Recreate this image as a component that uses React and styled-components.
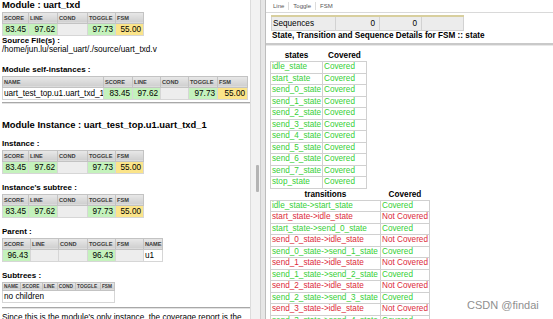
import styled, { createGlobalStyle } from 'styled-components';

const GlobalStyle = createGlobalStyle`
html, body {
  margin: 0;
  padding: 0;
  overflow: hidden;
  background: #fff;
}
body {
  font-family: "Liberation Sans", Arial, sans-serif;
  color: #000;
}
`

const tones = {
  green: '#c4f2bc',
  yellow: '#fbe48a',
  empty: '#ededed',
  plain: '#fff',
}

const scoreCols = ['SCORE', 'LINE', 'COND', 'TOGGLE', 'FSM'];

const moduleCells = [
  ['83.45', 'green'], ['97.62', 'green'], ['', 'empty'], ['97.73', 'green'], ['55.00', 'yellow'],
];

const states = [
  'idle_state', 'start_state', 'send_0_state', 'send_1_state', 'send_2_state', 'send_3_state',
  'send_4_state', 'send_5_state', 'send_6_state', 'send_7_state', 'stop_state',
];

const transitions = [
  ['idle_state->start_state', true],
  ['start_state->idle_state', false],
  ['start_state->send_0_state', true],
  ['send_0_state->idle_state', false],
  ['send_0_state->send_1_state', true],
  ['send_1_state->idle_state', false],
  ['send_1_state->send_2_state', true],
  ['send_2_state->idle_state', false],
  ['send_2_state->send_3_state', true],
  ['send_3_state->idle_state', false],
  ['send_3_state->send_4_state', true],
  ['send_4_state->idle_state', false],
];

// one coverage score table (header row + single data row)
const ScoreTable = ({ cols, widths, cells, tiny, width }) => (
  <Grid $w={width} $fixed={!!widths}>
    {widths && (
      <colgroup>
        {widths.map((w, i) => <Col key={i} $w={w} />)}
      </colgroup>
    )}
    <thead>
      <tr>
        {cols.map(c => <HeadCell key={c} $tiny={tiny}>{c}</HeadCell>)}
      </tr>
    </thead>
    <tbody>
      <tr>
        {cells.map(([text, tone, align, span], i) => (
          <Cell key={i} $tone={tone} $align={align || 'right'} colSpan={span}>{text}</Cell>
        ))}
      </tr>
    </tbody>
  </Grid>
)

const App = () => {
  return (
    <Page>
      <GlobalStyle />
      <LeftPane>
        <ModuleTitle>Module : uart_txd</ModuleTitle>
        <ScoreTable cols={scoreCols} widths={[26, 29, 30, 28, 28]} width={141} cells={moduleCells} />
        <SubHeading $mt={0}>Source File(s) :</SubHeading>
        <PathText>/home/jun.lu/serial_uart/./source/uart_txd.v</PathText>
        <SubHeading $mt={10}>Module self-instances :</SubHeading>
        <ScoreTable
          cols={['NAME', ...scoreCols]}
          widths={[101, 29, 28, 28, 29, 30]}
          width={245}
          cells={[['uart_test_top.u1.uart_txd_1', 'plain', 'left'], ...moduleCells]}
        />
        <Rule $mt={2} />
        <ModuleTitle $mt={16}>Module Instance : uart_test_top.u1.uart_txd_1</ModuleTitle>
        <SubHeading $mt={9}>Instance :</SubHeading>
        <ScoreTable cols={scoreCols} widths={[26, 29, 30, 28, 28]} width={141} cells={moduleCells} />
        <SubHeading $mt={9}>Instance's subtree :</SubHeading>
        <ScoreTable cols={scoreCols} widths={[26, 29, 30, 28, 28]} width={141} cells={moduleCells} />
        <SubHeading $mt={9}>Parent :</SubHeading>
        <ScoreTable
          cols={[...scoreCols, 'NAME']}
          widths={[28, 28, 29, 28, 28, 19]}
          width={160}
          cells={[
            ['96.43', 'green'], ['', 'empty'], ['', 'empty'], ['96.43', 'green'], ['', 'empty'],
            ['u1', 'plain', 'left'],
          ]}
        />
        <SubHeading $mt={9}>Subtrees :</SubHeading>
        <ScoreTable
          cols={['NAME', ...scoreCols]}
          width={113}
          tiny
          cells={[['no children', 'plain', 'left', 6]]}
        />
        <Rule $mt={4} />
        <Note>Since this is the module's only instance, the coverage report is the</Note>
      </LeftPane>

      <ScrollTrack>
        <Thumb />
      </ScrollTrack>
      <Splitter />

      <RightPane>
        <TabBar>
          <Tab>Line</Tab>
          <Tab>Toggle</Tab>
          <Tab $last>FSM</Tab>
        </TabBar>

        <SeqTable>
          <colgroup>
            <Col $w={64} />
            <Col $w={44} />
            <Col $w={42} />
            <Col $w={42} />
          </colgroup>
          <tbody>
            <tr>
              <SeqCell>Sequences</SeqCell>
              <SeqCell $align="right">0</SeqCell>
              <SeqCell $align="right">0</SeqCell>
              <SeqCell />
            </tr>
          </tbody>
        </SeqTable>

        <FsmTitle>State, Transition and Sequence Details for FSM :: state</FsmTitle>
        <Divider />

        <FsmTable $w={96} $mt={4}>
          <colgroup>
            <Col $w={52} />
            <Col $w={44} />
          </colgroup>
          <thead>
            <tr>
              <FsmHead>states</FsmHead>
              <FsmHead>Covered</FsmHead>
            </tr>
          </thead>
          <tbody>
            {states.map(s => (
              <tr key={s}>
                <FsmCell $ok>{s}</FsmCell>
                <FsmCell $ok>Covered</FsmCell>
              </tr>
            ))}
          </tbody>
        </FsmTable>

        <FsmTable $w={159} $mt={0}>
          <colgroup>
            <Col $w={110} />
            <Col $w={49} />
          </colgroup>
          <thead>
            <tr>
              <FsmHead>transitions</FsmHead>
              <FsmHead>Covered</FsmHead>
            </tr>
          </thead>
          <tbody>
            {transitions.map(([t, ok]) => (
              <tr key={t}>
                <FsmCell $ok={ok}>{t}</FsmCell>
                <FsmCell $ok={ok}>{ok ? 'Covered' : 'Not Covered'}</FsmCell>
              </tr>
            ))}
          </tbody>
        </FsmTable>
      </RightPane>

      <Watermark>CSDN @findai</Watermark>
    </Page>
  )
}

export default App

//styling
const Page = styled.div`
position: relative;
display: flex;
width: 553px;
height: 319px;
overflow: hidden;
background: #fff;
`

const LeftPane = styled.div`
flex: none;
width: 250px;
padding-left: 2px;
box-sizing: border-box;
overflow: hidden;
`

const ModuleTitle = styled.div`
margin-top: ${p => p.$mt || 0}px;
font-size: 9.4px;
line-height: 10px;
font-weight: bold;
white-space: nowrap;
`

const SubHeading = styled.div`
margin-top: ${p => p.$mt}px;
font-size: 8px;
line-height: 9px;
font-weight: bold;
white-space: nowrap;
`

const PathText = styled.div`
font-size: 8.2px;
line-height: 10px;
white-space: nowrap;
`

const Grid = styled.table`
margin-top: 1.5px;
border-collapse: collapse;
table-layout: ${p => (p.$fixed ? 'fixed' : 'auto')};
width: ${p => p.$w}px;
`

const Col = styled.col`
width: ${p => p.$w}px;
`

const HeadCell = styled.th`
height: ${p => (p.$tiny ? 7 : 10)}px;
padding: 0 1px;
font-size: ${p => (p.$tiny ? 4.8 : 5.6)}px;
line-height: ${p => (p.$tiny ? 7 : 10)}px;
font-weight: bold;
text-align: left;
color: #3a3a3a;
background: linear-gradient(#e9e9e9, #cecece);
border: 1px solid #c3c3c3;
white-space: nowrap;
overflow: hidden;
`

const Cell = styled.td`
height: 11.5px;
padding: 0 ${p => (p.$align === 'left' ? 1 : 2)}px;
font-size: 8.2px;
line-height: 11px;
text-align: ${p => p.$align};
background: ${p => tones[p.$tone]};
border: 1px solid #d6d6d6;
white-space: nowrap;
overflow: hidden;
`

const Rule = styled.div`
margin-top: ${p => p.$mt}px;
width: 248px;
border-top: 1px solid #a8a8a8;
border-bottom: 1px solid #e2e2e2;
`

const Note = styled.div`
margin-top: 4px;
font-size: 8.2px;
line-height: 10px;
white-space: nowrap;
`

const ScrollTrack = styled.div`
flex: none;
width: 10px;
box-sizing: border-box;
padding: 165px 1px 0 0;
display: flex;
flex-direction: column;
align-items: flex-end;
background: #f2f2f2;
border-left: 1px solid #dcdcdc;
`

const Thumb = styled.div`
width: 3px;
height: 27px;
background: #b4b4b4;
border-radius: 1px;
`

const Splitter = styled.div`
flex: none;
width: 5px;
box-sizing: border-box;
background: #e6e6e6;
border-left: 1px solid #cdcdcd;
`

const RightPane = styled.div`
flex: 1;
min-width: 0;
overflow: hidden;
border-left: 1px solid #bdbdbd;
`

const TabBar = styled.div`
display: flex;
align-items: center;
height: 12px;
padding-left: 3px;
border-bottom: 1px solid #d9d9d9;
font-size: 6px;
color: #555;
`

const Tab = styled.div`
padding: 0 4px;
line-height: 8px;
border-right: ${p => (p.$last ? 'none' : '1px solid #dcdcdc')};
`

const SeqTable = styled.table`
margin: 2px 0 0 5px;
border-collapse: collapse;
table-layout: fixed;
width: 192px;
border-top: 2px solid #d8cf9e;
`

const SeqCell = styled.td`
height: 13px;
padding: 0 ${p => (p.$align === 'right' ? 4 : 1)}px;
font-size: 8.2px;
line-height: 13px;
text-align: ${p => p.$align || 'left'};
background: #ececec;
border: 1px solid #d2d2d2;
white-space: nowrap;
`

const FsmTitle = styled.div`
margin-left: 6px;
font-size: 8.2px;
line-height: 10px;
font-weight: bold;
white-space: nowrap;
`

const Divider = styled.div`
margin-top: 2px;
height: 2px;
background: #c9c9c9;
border-bottom: 1px solid #e8e8e8;
`

const FsmTable = styled.table`
margin: ${p => p.$mt}px 0 0 4px;
border-collapse: collapse;
table-layout: fixed;
width: ${p => p.$w}px;
`

const FsmHead = styled.th`
height: 11px;
padding: 0;
font-size: 8.2px;
line-height: 11px;
font-weight: bold;
text-align: center;
white-space: nowrap;
`

const FsmCell = styled.td`
height: 10.5px;
padding: 0 1px;
font-size: 8.2px;
line-height: 10px;
color: ${p => (p.$ok ? '#36cf36' : '#dc2a3a')};
border: 1px solid #d0d0d0;
white-space: nowrap;
overflow: hidden;
`

const Watermark = styled.div`
position: absolute;
left: 467px;
top: 300px;
font-size: 11px;
line-height: 11px;
color: #8f8f8f;
white-space: nowrap;
`
